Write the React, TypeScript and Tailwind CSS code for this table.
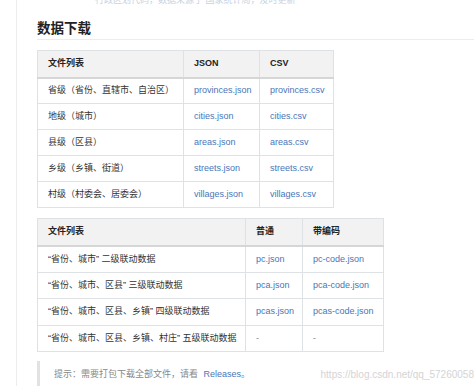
const table1 = [
  { name: "省级（省份、直辖市、自治区）", json: "provinces.json", csv: "provinces.csv" },
  { name: "地级（城市）", json: "cities.json", csv: "cities.csv" },
  { name: "县级（区县）", json: "areas.json", csv: "areas.csv" },
  { name: "乡级（乡镇、街道）", json: "streets.json", csv: "streets.csv" },
  { name: "村级（村委会、居委会）", json: "villages.json", csv: "villages.csv" },
];

const table2 = [
  { name: "“省份、城市” 二级联动数据", plain: "pc.json", code: "pc-code.json" },
  { name: "“省份、城市、区县” 三级联动数据", plain: "pca.json", code: "pca-code.json" },
  { name: "“省份、城市、区县、乡镇” 四级联动数据", plain: "pcas.json", code: "pcas-code.json" },
  { name: "“省份、城市、区县、乡镇、村庄” 五级联动数据", plain: "-", code: "-" },
];

const font = {
  fontFamily: '"Liberation Sans", "Noto Sans CJK SC", sans-serif',
};

function Cell({ children, link }: { children: string; link?: boolean }) {
  const isDash = children === "-";
  return (
    <td
      className={`border border-[#dfe2e5] pl-[10px] pr-2 align-middle whitespace-nowrap ${
        link && !isDash ? "text-[#4a76b8]" : isDash ? "text-[#888]" : "text-[#333]"
      }`}
    >
      {children}
    </td>
  );
}

function Head({ children }: { children: string }) {
  return (
    <th className="border border-[#dfe2e5] border-b-2 border-b-[#d6d6d6] bg-[#f2f2f2] pl-[10px] text-left font-bold text-[#222]">
      {children}
    </th>
  );
}

export default function App() {
  return (
    <div
      className="w-[474px] h-[386px] overflow-hidden bg-white flex text-[9px] leading-none"
      style={font}
    >
      <div className="w-[16px] shrink-0" />
      <div className="flex-1 border-l border-[#ececec] pl-[20px] min-w-0">
        {/* cut-off line from previous section */}
        <div className="h-[6px] overflow-hidden">
          <div className="-mt-[6px] ml-[58px] text-[9px] leading-[12px] text-[#c8d2e2] whitespace-nowrap">
            行政区划代码，数据来源于 国家统计局，及时更新
          </div>
        </div>

        <h2 className="mt-[14px] text-[13.5px] leading-[18px] font-bold text-[#222]">
          数据下载
        </h2>
        <div className="mt-px border-b border-[#eaecef] -mr-px" />

        <table className="mt-[10px] border-collapse table-fixed w-[296px]">
          <colgroup>
            <col className="w-[146px]" />
            <col className="w-[76px]" />
            <col className="w-[74px]" />
          </colgroup>
          <thead>
            <tr className="h-[27px]">
              <Head>文件列表</Head>
              <Head>JSON</Head>
              <Head>CSV</Head>
            </tr>
          </thead>
          <tbody>
            {table1.map((r) => (
              <tr key={r.json} className="h-[26px]">
                <Cell>{r.name}</Cell>
                <Cell link>{r.json}</Cell>
                <Cell link>{r.csv}</Cell>
              </tr>
            ))}
          </tbody>
        </table>

        <table className="mt-[10px] border-collapse table-fixed w-[346px]">
          <colgroup>
            <col className="w-[208px]" />
            <col className="w-[57px]" />
            <col className="w-[81px]" />
          </colgroup>
          <thead>
            <tr className="h-[27px]">
              <Head>文件列表</Head>
              <Head>普通</Head>
              <Head>带编码</Head>
            </tr>
          </thead>
          <tbody>
            {table2.map((r) => (
              <tr key={r.name} className="h-[26.5px]">
                <Cell>{r.name}</Cell>
                <Cell link>{r.plain}</Cell>
                <Cell link>{r.code}</Cell>
              </tr>
            ))}
          </tbody>
        </table>

        <div className="mt-[9px] flex items-start">
          <div className="border-l-[3px] border-[#e2e2e2] h-[30px] pl-[14px] pt-[9px] text-[#888] whitespace-nowrap">
            提示：需要打包下载全部文件，请看{" "}
            <span className="text-[#4a76b8] ml-[3px]">Releases</span>。
          </div>
          <div className="ml-auto pt-[9px] text-[10px] text-[#d4d4d4] whitespace-nowrap">
            https://blog.csdn.net/qq_57260058
          </div>
        </div>
      </div>
    </div>
  );
}
